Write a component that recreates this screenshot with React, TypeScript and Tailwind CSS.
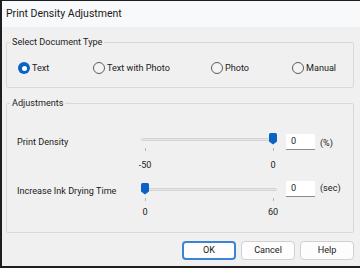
import React from "react";

const FONT = "font-['Roboto','Liberation_Sans',sans-serif]";

function Radio({ checked, label }: { checked?: boolean; label: string }) {
  return (
    <div className="flex items-center gap-[2px]">
      {checked ? (
        <span className="flex h-[12px] w-[12px] items-center justify-center rounded-full bg-[#0a63c4]">
          <span className="h-[5px] w-[5px] rounded-full bg-white" />
        </span>
      ) : (
        <span className="h-[12px] w-[12px] rounded-full border border-[#5c5c5c] bg-[#f4f4f4]" />
      )}
      <span className="leading-[12px]">{label}</span>
    </div>
  );
}

function Slider({
  value,
  min,
  max,
  left,
  right,
  numMt,
}: {
  value: number;
  min: number;
  max: number;
  left: string;
  right: string;
  numMt: string;
}) {
  const frac = (value - min) / (max - min);
  return (
    <div className="flex w-[136px] flex-col">
      <div className="relative flex h-[12px] items-center">
        <div className="h-[3px] w-full rounded-full border border-[#d4d4d4] bg-[#e4e4e4]" />
        <svg
          className="absolute top-0"
          style={{ left: `${frac * 128}px` }}
          width="8"
          height="12"
          viewBox="0 0 8 12"
        >
          <path d="M1.5 0 H6.5 Q8 0 8 1.5 V8.5 L4 11.5 L0 8.5 V1.5 Q0 0 1.5 0 Z" fill="#0a63c4" />
        </svg>
      </div>
      <div className="mt-[3px] flex justify-between">
        <div className="flex w-[8px] justify-center">
          <span className="h-[3px] w-px bg-[#b8b8b8]" />
        </div>
        <div className="flex w-[8px] justify-center">
          <span className="h-[3px] w-px bg-[#b8b8b8]" />
        </div>
      </div>
      <div className={`flex justify-between leading-[12px] ${numMt}`}>
        <div className="flex w-[8px] justify-center whitespace-nowrap">{left}</div>
        <div className="flex w-[8px] justify-center whitespace-nowrap">{right}</div>
      </div>
    </div>
  );
}

function Row({
  label,
  value,
  min,
  max,
  left,
  right,
  unit,
  labelMt,
  thumbMt,
  inputMt,
  unitMt,
  numMt,
  className,
}: {
  label: string;
  value: number;
  min: number;
  max: number;
  left: string;
  right: string;
  unit: string;
  labelMt: string;
  thumbMt: string;
  inputMt: string;
  unitMt: string;
  numMt: string;
  className?: string;
}) {
  return (
    <div className={`flex items-start pl-[10px] ${className ?? ""}`}>
      <div className={`w-[124px] leading-[12px] ${labelMt}`}>{label}</div>
      <div className={thumbMt}>
        <Slider value={value} min={min} max={max} left={left} right={right} numMt={numMt} />
      </div>
      <div
        className={`ml-[9px] flex h-[16px] w-[29px] items-center border-b border-[#8a8a8a] bg-white pl-[5px] ${inputMt}`}
      >
        0
      </div>
      <div className={`ml-[5px] leading-[12px] ${unitMt}`}>{unit}</div>
    </div>
  );
}

export default function App() {
  return (
    <div
      className={`${FONT} flex h-[268px] w-[360px] flex-col overflow-hidden border-b-2 border-l-2 border-t border-[#1e1e1e] bg-[#f0f0f0] text-[9.1px] text-[#1b1b1b]`}
    >
      <div className="flex h-[26px] shrink-0 items-center bg-[#f8f9fb] pl-[4px] text-[10.5px] text-[#1a1a1a]">
        Print Density Adjustment
      </div>

      <div className="flex flex-col pl-[4px] pr-[6px]">
        <fieldset className="mt-[9px] rounded-[2px] border border-[#d9d9d9] pb-[13px]">
          <legend className="ml-[3px] px-[2px] leading-[12px]">Select Document Type</legend>
          <div className="mt-[14px] grid grid-cols-[75px_118px_81px_1fr] pl-[11px]">
            <Radio checked label="Text" />
            <Radio label="Text with Photo" />
            <Radio label="Photo" />
            <Radio label="Manual" />
          </div>
        </fieldset>

        <fieldset className="mt-[9px] rounded-[2px] border border-[#d9d9d9] pb-[14px]">
          <legend className="ml-[3px] px-[2px] leading-[12px]">Adjustments</legend>
          <Row
            className="mt-[24px]"
            label="Print Density"
            value={0}
            min={-50}
            max={0}
            left="-50"
            right="0"
            unit="(%)"
            labelMt="mt-[3px]"
            thumbMt="mt-0"
            inputMt="mt-[1px]"
            unitMt="mt-[4px]"
            numMt="mt-[8px]"
          />
          <Row
            className="mt-[10px]"
            label="Increase Ink Drying Time"
            value={0}
            min={0}
            max={60}
            left="0"
            right="60"
            unit="(sec)"
            labelMt="mt-[4px]"
            thumbMt="mt-[2px]"
            inputMt="mt-0"
            unitMt="mt-[1px]"
            numMt="mt-[5px]"
          />
        </fieldset>

        <div className="mt-[8px] flex justify-end gap-[5px]">
          <button className="flex h-[19px] w-[54px] items-center justify-center rounded-[4px] border-2 border-[#3b84d4] bg-[#fdfdfd]">
            OK
          </button>
          <button className="flex h-[19px] w-[54px] items-center justify-center rounded-[4px] border border-[#d0d0d0] bg-[#fdfdfd]">
            Cancel
          </button>
          <button className="flex h-[19px] w-[54px] items-center justify-center rounded-[4px] border border-[#d0d0d0] bg-[#fdfdfd]">
            Help
          </button>
        </div>
      </div>
    </div>
  );
}
